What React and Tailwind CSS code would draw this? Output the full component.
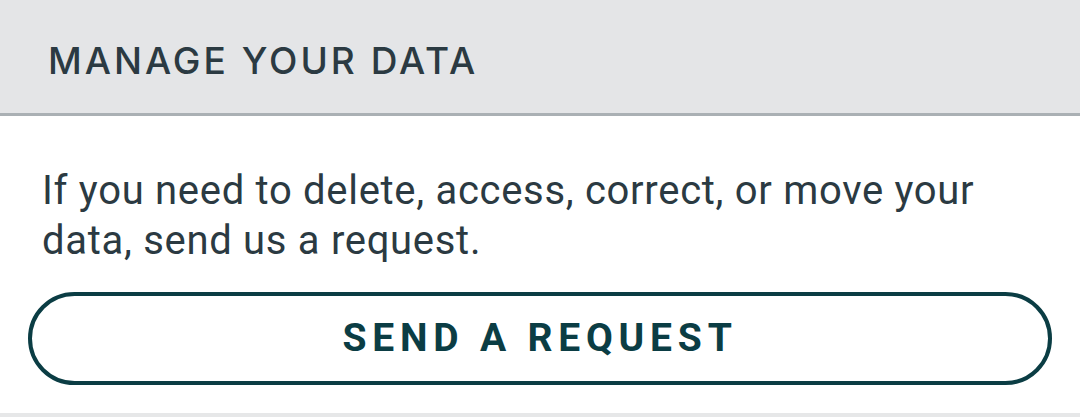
export default function App() {
    return (
        <div className="w-[1080px] h-[417px] bg-white flex flex-col overflow-hidden">
            {/* Header */}
            <div className="h-[116px] shrink-0 bg-[#e4e5e7] border-b-[3px] border-[#aab0b4] flex items-center pl-[48px] pt-[8px]">
                <h2
                    className="text-[37px] font-medium tracking-[3px] text-[#2b3a42] leading-none"
                    style={{ fontFamily: '"Inter", "Noto Sans", sans-serif' }}
                >
                    MANAGE YOUR DATA
                </h2>
            </div>

            {/* Body */}
            <div className="flex-1 flex flex-col px-[28px] pt-[50px]" style={{ fontFamily: 'Roboto, sans-serif' }}>
                <p className="pl-[14px] max-w-[1000px] text-[40px] tracking-[0.7px] leading-[50px] text-[#2b3a42]">
                    If you need to delete, access, correct, or move your data, send us a request.
                </p>
                <button className="mt-[26px] h-[93px] w-full rounded-full border-[4px] border-[#0b3d44] flex items-center justify-center">
                    <span className="text-[39px] font-bold tracking-[5.8px] text-[#0b3d44] leading-none">
                        SEND A REQUEST
                    </span>
                </button>
            </div>

            <div className="h-[4px] shrink-0 bg-[#e6e7e8]" />
        </div>
    );
}
